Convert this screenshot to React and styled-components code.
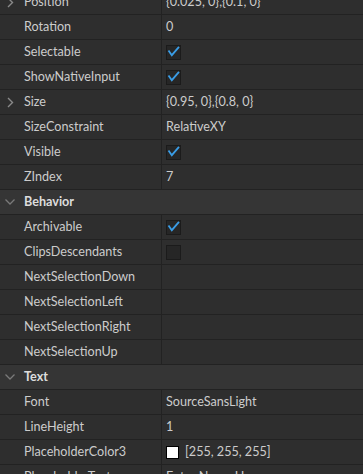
import React from "react";
import styled, { createGlobalStyle } from "styled-components";

const GlobalStyle = createGlobalStyle`
  html, body {
    margin: 0;
    padding: 0;
    background: #2e2e2e;
    overflow: hidden;
  }
  body {
    font-family: Lato, "Noto Sans", sans-serif;
    font-size: 12.6px;
    color: #cccccc;
  }
`;

const Panel = styled.div`
  display: flex;
  flex-direction: column;
  margin-top: -10px;
  width: 363px;
`;

const Row = styled.div`
  display: grid;
  grid-template-columns: ${(p) => (p.$header ? "1fr" : "162px 1fr")};
  height: 24px;
  border-bottom: 1px solid #222222;
  background: ${(p) => (p.$header ? "#353535" : "#2e2e2e")};
`;

const NameCell = styled.div`
  display: flex;
  align-items: center;
  min-width: 0;
  padding-bottom: 2px;
  border-right: 1px solid #222222;
  box-sizing: border-box;
  white-space: nowrap;
  overflow: hidden;
`;

const HeaderCell = styled.div`
  display: flex;
  align-items: center;
  padding-bottom: 2px;
  box-sizing: border-box;
  font-weight: 700;
  color: #dddddd;
`;

const ChevronSlot = styled.div`
  width: 24px;
  flex: none;
  display: flex;
  align-items: center;
  padding-left: ${(p) => p.$pad}px;
  padding-top: 2px;
  box-sizing: border-box;
`;

const ValueCell = styled.div`
  display: flex;
  align-items: center;
  gap: 5px;
  min-width: 0;
  padding-left: 4px;
  padding-bottom: 2px;
  box-sizing: border-box;
  white-space: nowrap;
  overflow: hidden;
`;

const Box = styled.div`
  width: 15px;
  height: 15px;
  margin-top: 2px;
  box-sizing: border-box;
  background: #262626;
  border: 1px solid #1b1b1b;
  display: flex;
  align-items: center;
  justify-content: center;
`;

const Swatch = styled.div`
  width: 13px;
  height: 13px;
  margin-top: 2px;
  box-sizing: border-box;
  background: #ffffff;
  border: 1px solid #000000;
  margin-right: 1px;
`;

const RightChevron = () => (
  <svg width="7" height="11" viewBox="0 0 7 11">
    <path d="M1 1 L5.5 5.5 L1 10" fill="none" stroke="#8a8a8a" strokeWidth="1.4" />
  </svg>
);

const DownChevron = () => (
  <svg width="10" height="6" viewBox="0 0 10 6">
    <path d="M0.5 0.5 L5 5 L9.5 0.5" fill="none" stroke="#7a7a7a" strokeWidth="1.3" />
  </svg>
);

const Check = () => (
  <svg width="13" height="13" viewBox="0 0 13 13">
    <path d="M1.5 4.5 L4.8 9.2 L12 0.8" fill="none" stroke="#3a9de6" strokeWidth="1.8" />
  </svg>
);

const rows = [
  { name: "Position", expand: true, value: "{0.025, 0},{0.1, 0}" },
  { name: "Rotation", value: "0" },
  { name: "Selectable", check: true },
  { name: "ShowNativeInput", check: true },
  { name: "Size", expand: true, value: "{0.95, 0},{0.8, 0}" },
  { name: "SizeConstraint", value: "RelativeXY" },
  { name: "Visible", check: true },
  { name: "ZIndex", value: "7" },
  { header: "Behavior" },
  { name: "Archivable", check: true },
  { name: "ClipsDescendants", check: false },
  { name: "NextSelectionDown" },
  { name: "NextSelectionLeft" },
  { name: "NextSelectionRight" },
  { name: "NextSelectionUp" },
  { header: "Text" },
  { name: "Font", value: "SourceSansLight" },
  { name: "LineHeight", value: "1" },
  { name: "PlaceholderColor3", color: "#ffffff", value: "[255, 255, 255]" },
  { name: "PlaceholderText", value: "Enter Name Here" },
];

export default function App() {
  return (
    <>
      <GlobalStyle />
      <Panel>
        {rows.map((r, i) =>
          r.header ? (
            <Row key={i} $header>
              <HeaderCell>
                <ChevronSlot $pad={5}>
                  <DownChevron />
                </ChevronSlot>
                {r.header}
              </HeaderCell>
            </Row>
          ) : (
            <Row key={i}>
              <NameCell>
                <ChevronSlot $pad={7}>{r.expand && <RightChevron />}</ChevronSlot>
                {r.name}
              </NameCell>
              <ValueCell>
                {r.check !== undefined && <Box>{r.check && <Check />}</Box>}
                {r.color && <Swatch />}
                {r.value}
              </ValueCell>
            </Row>
          )
        )}
      </Panel>
    </>
  );
}
